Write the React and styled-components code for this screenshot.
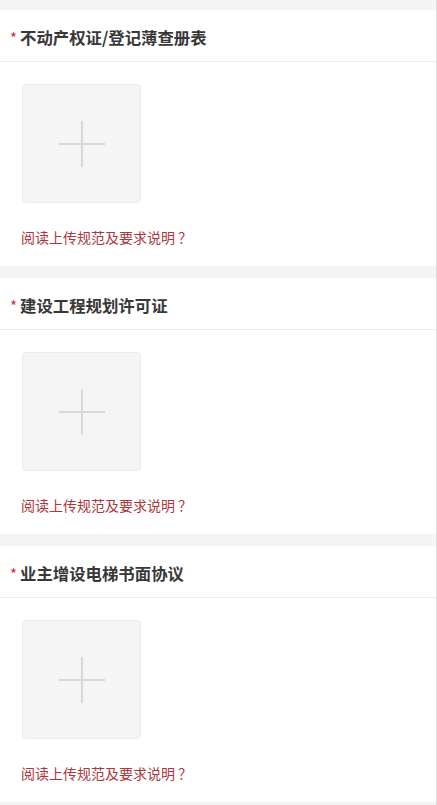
import styled, { createGlobalStyle } from "styled-components";

const GlobalStyle = createGlobalStyle`
  html, body {
    margin: 0;
    padding: 0;
    background: #f4f4f4;
  }
  body {
    font-family: "Noto Sans CJK SC", "Liberation Sans", sans-serif;
  }
`;

const Page = styled.div`
  box-sizing: border-box;
  width: 437px;
  min-height: 805px;
  padding-top: 10px;
  background: #f4f4f4;
  border-right: 1px solid #dcdcdc;
  display: flex;
  flex-direction: column;
  gap: 12px;
`;

const Section = styled.section`
  background: #fff;
`;

const Header = styled.div`
  height: 51px;
  display: flex;
  align-items: center;
  padding-left: 10px;
  border-bottom: 1px solid #ececec;
`;

const Star = styled.span`
  color: #c0393b;
  font-size: 15px;
  font-weight: 400;
  margin-right: 3px;
  line-height: 1;
  position: relative;
  top: 2px;
`;

const Title = styled.h3`
  margin: 0;
  font-size: 16.4px;
  font-weight: 700;
  color: #383838;
  position: relative;
  top: 1px;
`;

const Body = styled.div`
  height: 204px;
  box-sizing: border-box;
  padding: 22px 0 0 22px;
  display: flex;
  flex-direction: column;
  align-items: flex-start;
`;

const UploadBox = styled.div`
  box-sizing: border-box;
  width: 119px;
  height: 119px;
  background: #f6f5f5;
  border: 1px solid #ebebeb;
  border-radius: 4px;
  display: flex;
  align-items: center;
  justify-content: center;
`;

const Plus = styled.div`
  position: relative;
  width: 46px;
  height: 46px;
  &::before,
  &::after {
    content: "";
    position: absolute;
    background: #d8d8d8;
  }
  &::before {
    left: 0;
    right: 0;
    top: 22px;
    height: 2px;
  }
  &::after {
    top: 0;
    bottom: 0;
    left: 22px;
    width: 2px;
  }
`;

const Hint = styled.a`
  margin: 24px 0 0 -1px;
  font-size: 14px;
  color: #a9383e;
  text-decoration: none;
  line-height: 20px;
`;

const Mark = styled.span`
  margin-left: 3px;
`;

const items = ["不动产权证/登记薄查册表", "建设工程规划许可证", "业主增设电梯书面协议"];

const App = () => {
  return (
    <Page>
      <GlobalStyle />
      {items.map((title) => (
        <Section key={title}>
          <Header>
            <Star>*</Star>
            <Title>{title}</Title>
          </Header>
          <Body>
            <UploadBox>
              <Plus />
            </UploadBox>
            <Hint>
              阅读上传规范及要求说明<Mark>？</Mark>
            </Hint>
          </Body>
        </Section>
      ))}
    </Page>
  );
};

export default App;
